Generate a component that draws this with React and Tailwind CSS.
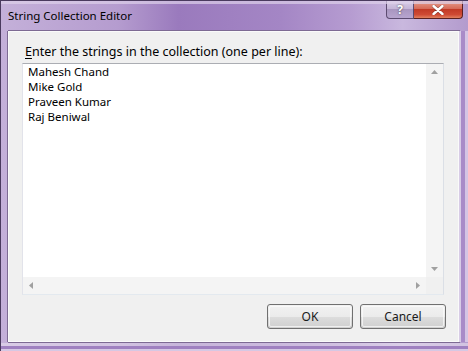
import React from "react";

const font = { fontFamily: '"Noto Sans", "Open Sans", sans-serif' };

function Arrow({ dir }) {
  const pts = {
    up: "0,4 3.5,0 7,4",
    down: "0,0 3.5,4 7,0",
    left: "4,0 0,3.5 4,7",
    right: "0,0 4,3.5 0,7",
  }[dir];
  const w = dir === "up" || dir === "down" ? 7 : 4;
  const h = dir === "up" || dir === "down" ? 4 : 7;
  return (
    <svg width={w} height={h} viewBox={`0 0 ${w} ${h}`}>
      <polygon points={pts} fill="#a0a0a0" />
    </svg>
  );
}

function Button({ children }) {
  return (
    <div className="w-[86px] h-[25px] rounded-[3px] border border-[#707070] p-px bg-[linear-gradient(to_bottom,#f2f2f2_0%,#ebebeb_50%,#dddddd_50%,#cfcfcf_100%)]">
      <div className="w-full h-full rounded-[2px] border border-[#fcfcfc]/70 flex items-center justify-center text-[12px] text-[#1a1a1a]">
        {children}
      </div>
    </div>
  );
}

export default function App() {
  return (
    <div
      className="w-[468px] h-[351px] flex flex-col overflow-hidden bg-[linear-gradient(to_right,#c4b0d9_0%,#b59ccf_25%,#9a7abd_38%,#a486c5_60%,#b69cd1_75%,#c9b8de_86%,#b39bcd_100%)] border-l border-t border-[#4a3a5e]"
      style={font}
    >
      {/* title bar */}
      <div className="h-[29px] flex items-start relative">
        <div className="absolute inset-x-0 top-0 h-[3px] bg-[#ddd0ea]/70" />
        <div className="pl-[7px] pt-[7px] text-[11.5px] text-black leading-[15px]">
          String Collection Editor
        </div>
        <div className="ml-auto mr-[5px] flex">
          <div className="w-[28px] h-[18px] rounded-bl-[4px] border border-t-0 border-[#5c4b70] bg-[linear-gradient(to_bottom,#d9cde6_0%,#c3b3d6_50%,#a996c0_50%,#b7a5cf_100%)] flex items-center justify-center text-[12px] font-bold text-white [text-shadow:0_0_2px_#333]">
            ?
          </div>
          <div className="w-[49px] h-[18px] rounded-br-[4px] border border-l-0 border-t-0 border-[#5a2020] bg-[linear-gradient(to_bottom,#e8a090_0%,#d66a58_45%,#c23a26_50%,#cf4a34_80%,#e2805f_100%)] flex items-center justify-center">
            <svg width="12" height="10" viewBox="0 0 12 10">
              <path d="M1.5 1 L10.5 9 M10.5 1 L1.5 9" stroke="#3a1a1a" strokeWidth="3.4" strokeLinecap="round" opacity="0.5" />
              <path d="M1.5 1 L10.5 9 M10.5 1 L1.5 9" stroke="#ffffff" strokeWidth="2.4" strokeLinecap="round" />
            </svg>
          </div>
        </div>
      </div>
      <div className="h-px bg-[#7d6a93] ml-[7px] mr-[8px]" />

      {/* body */}
      <div className="flex-1 flex">
        <div className="w-[7px] border-r border-[#7d6a93]" />
        <div className="flex-1 bg-[#f0f0f0] border border-[#fafafa] flex flex-col pl-[13px] pr-[14px]">
          <div className="pt-[12px] pl-[3px] text-[12.5px] leading-[16px] text-black h-[31px] whitespace-nowrap">
            <span className="underline underline-offset-2">E</span>nter the strings in the collection (one per line):
          </div>
          <div className="h-[232px] w-[422px] border border-[#abadb3] border-r-[#dbdfe6] border-b-[#e3e9ef] border-l-[#e2e3ea] bg-white flex flex-col">
            <div className="flex-1 flex min-h-0">
              <div className="flex-1 pl-[5px] pt-0 text-[11.5px] leading-[15px] text-black">
                <div className="h-[15px]">Mahesh Chand</div>
                <div className="h-[15px]">Mike Gold</div>
                <div className="h-[15px]">Praveen Kumar</div>
                <div className="h-[15px]">Raj Beniwal</div>
              </div>
              <div className="w-[17px] bg-[#f4f4f4] flex flex-col items-center justify-between py-[6px]">
                <Arrow dir="up" />
                <Arrow dir="down" />
              </div>
            </div>
            <div className="h-[17px] flex bg-[#f4f4f4]">
              <div className="flex-1 flex items-center justify-between px-[6px]">
                <Arrow dir="left" />
                <Arrow dir="right" />
              </div>
              <div className="w-[17px] bg-[#f0f0f0]" />
            </div>
          </div>
          <div className="flex justify-end gap-[7px] mt-[9px] -mr-[2px]">
            <Button>OK</Button>
            <Button>Cancel</Button>
          </div>
        </div>
        <div className="w-[9px] flex">
          <div className="w-[2px] bg-[#d8cce6]" />
          <div className="w-[4px] bg-[#a98bc8]" />
          <div className="flex-1 bg-[#d4c4e4]" />
        </div>
      </div>
      <div className="h-px bg-[#7d6a93] ml-[7px] mr-[8px]" />
      <div className="h-[8px] flex flex-col">
        <div className="h-[3px] bg-[#e6ddef]/60" />
        <div className="h-[3px] bg-[#9f80c0]" />
        <div className="flex-1 bg-[#d6c8e4]" />
      </div>
    </div>
  );
}
